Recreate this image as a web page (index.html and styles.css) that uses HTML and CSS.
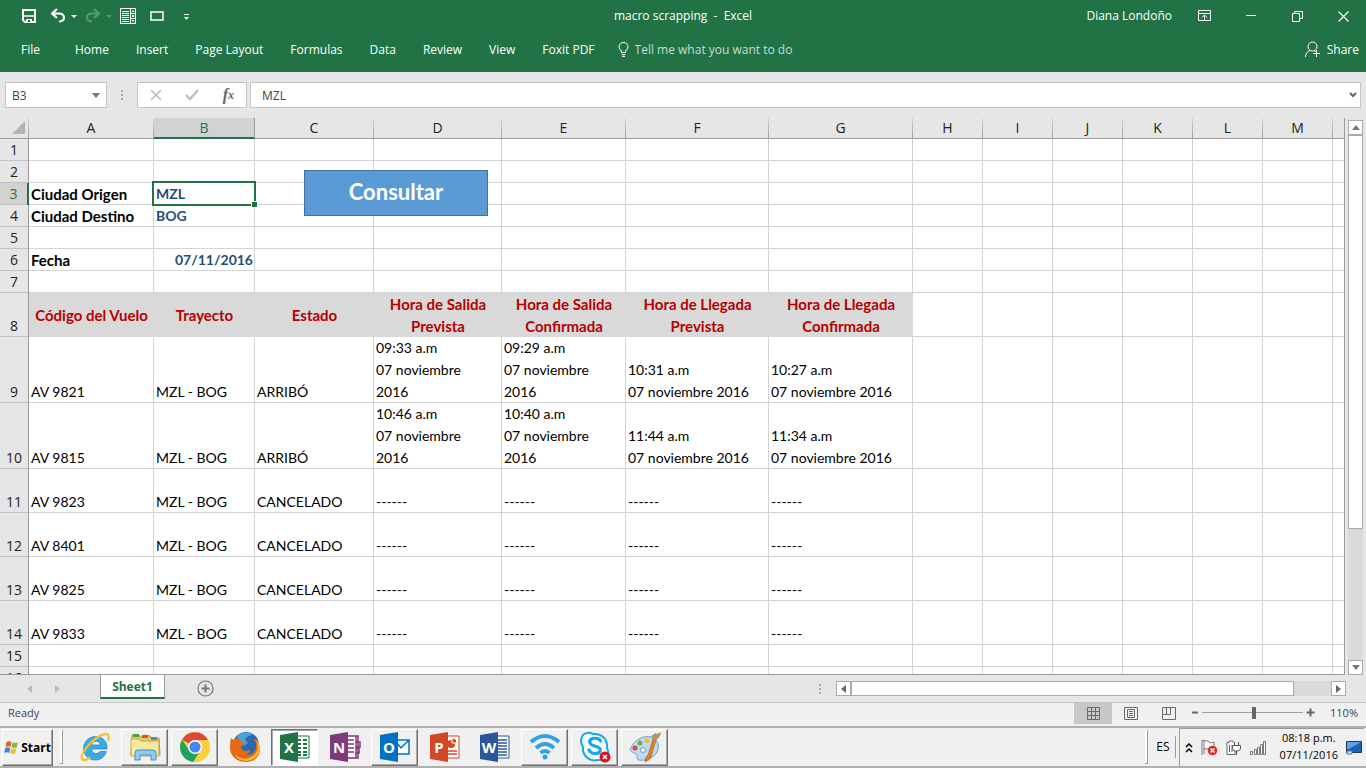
FILE: index.html
```
<!DOCTYPE html>
<html lang="es">
<head>
    <meta charset="UTF-8">
    <meta name="viewport" content="width=device-width, initial-scale=1.0">
    <title>macro scrapping - Excel</title>
    <link rel="stylesheet" href="styles.css">
</head>
<body>
    <!-- Title bar -->
    <header class="title-bar">
        <div class="quick-access">
            <button aria-label="Save"><svg width="21" height="16" viewBox="0 0 21 16"><path d="M1 2h12v12H3l-2-2z" fill="none" stroke="#fff" stroke-width="2"/><path d="M2 8h10" stroke="#fff" stroke-width="1.500"/><path d="M4 11h6v4H4z" fill="#fff"/><path d="M6 12h2v2H6z" fill="#217346"/></svg></button>
            <button aria-label="Undo"><svg width="26" height="16" viewBox="0 0 26 16"><path d="M6 1L1 5.500l5 4.500M1.500 5.500H8a5 4 0 0 1 0 8" fill="none" stroke="#fff" stroke-width="2.200"/><path d="M20 7h6l-3 3z" fill="#fff"/></svg></button>
            <button aria-label="Redo"><svg class="dim" width="27" height="16" viewBox="0 0 27 16"><path d="M9 1l5 4.500L9 10M13.500 5.500H7a5 4 0 0 0 0 8" fill="none" stroke="#fff" stroke-width="2.200"/><path d="M21 7h6l-3 3z" fill="#fff"/></svg></button>
            <button aria-label="Form"><svg width="22" height="18" viewBox="0 0 22 18"><path d="M.5 1.500h15v15H.5zM10.500 1.500v15M10.500 6.500h5M10.500 11.500h5M2 4.500h7M2 6.500h7M2 8.500h7M2 10.500h7M2 12.500h7M2 14.500h7" fill="none" stroke="#fff"/><path d="M11.500 5h3L13 3zM11.500 13h3L13 15zM12 8h2v2h-2z" fill="#fff"/></svg></button>
            <button aria-label="Rectangle"><svg width="25" height="16" viewBox="0 0 25 16"><path d="M1 4h12v8H1z" fill="none" stroke="#fff" stroke-width="1.500"/></svg></button>
            <button aria-label="Customize toolbar"><svg width="7" height="16" viewBox="0 0 7 16"><path d="M1 6.500h5" stroke="#fff"/><path d="M1 9h5l-2.500 3z" fill="#fff"/></svg></button>
        </div>
        <div class="window-title">macro scrapping&nbsp; -&nbsp; Excel</div>
        <div class="window-controls">
            <span class="user-name">Diana Londoño</span>
            <button aria-label="Ribbon display options"><svg width="14" height="12" viewBox="0 0 14 12"><path d="M.5.5h12v10H.5zM.5 3.500h12M6.500 10V5M4 7.500L6.500 5 9 7.500" fill="none" stroke="#fff"/></svg></button>
            <button aria-label="Minimize"><svg width="10" height="10" viewBox="0 0 10 10"><path d="M0 4.500h10" stroke="#fff"/></svg></button>
            <button aria-label="Restore"><svg width="11" height="11" viewBox="0 0 11 11"><path d="M.5 2.500h7v8h-7zM2.500 2.500v-2h8v7h-3" fill="none" stroke="#fff"/></svg></button>
            <button aria-label="Close"><svg width="11" height="11" viewBox="0 0 11 11"><path d="M.5.5l10 10M10.500.5l-10 10" stroke="#fff" stroke-width="1.200"/></svg></button>
        </div>
    </header>

    <!-- Ribbon tabs -->
    <nav class="ribbon">
        <button class="file-tab">File</button>
        <button>Home</button>
        <button>Insert</button>
        <button>Page Layout</button>
        <button>Formulas</button>
        <button>Data</button>
        <button>Review</button>
        <button>View</button>
        <button>Foxit PDF</button>
        <label class="tell-me">
            <svg width="11" height="15" viewBox="0 0 11 15"><path d="M3.500 10.500V9C2 8 1 6.500 1 5a4.500 4.500 0 0 1 9 0c0 1.500-1 3-2.500 4v1.500zM3.500 12.500h4M4 14.400h3" fill="none" stroke="#e3efe8" stroke-width="1.100"/></svg>
            <input type="text" placeholder="Tell me what you want to do" aria-label="Tell me what you want to do">
        </label>
        <button class="share">
            <svg width="16" height="17" viewBox="0 0 16 17"><circle cx="7.500" cy="5.500" r="4.500" fill="none" stroke="#fff"/><path d="M.5 16c0-3 1.500-5.500 4.500-6.500M9 9.500l2 1.500M11.500 9v7M8 12.500h7" fill="none" stroke="#fff"/></svg>
            Share
        </button>
    </nav>

    <!-- Formula bar -->
    <section class="formula-bar">
        <div class="name-box">
            <input type="text" value="B3" aria-label="Name box">
            <button aria-label="Open name list"><svg width="8" height="5" viewBox="0 0 8 5"><path d="M0 0h8L4 5z" fill="#777"/></svg></button>
        </div>
        <span class="dots"></span>
        <div class="formula-buttons">
            <button aria-label="Cancel"><svg width="12" height="12" viewBox="0 0 12 12"><path d="M1 1l10 10M11 1L1 11" stroke="#bdbdbd" stroke-width="1.700"/></svg></button>
            <button aria-label="Enter"><svg width="14" height="12" viewBox="0 0 14 12"><path d="M1 6l4 4 8-9" fill="none" stroke="#bdbdbd" stroke-width="2.300"/></svg></button>
            <button class="fx" aria-label="Insert function">f<sub>x</sub></button>
        </div>
        <div class="formula-input">
            <input type="text" value="MZL" aria-label="Formula">
            <button aria-label="Expand formula bar"><svg width="8" height="6" viewBox="0 0 8 6"><path d="M1 1l3 3 3-3" fill="none" stroke="#666" stroke-width="2"/></svg></button>
        </div>
    </section>

    <!-- Worksheet -->
    <main class="workspace">
        <div class="sheet">
            <table>
                <colgroup>
                    <col class="col-head">
                    <col class="col-a">
                    <col class="col-b">
                    <col class="col-c">
                    <col class="col-d">
                    <col class="col-e">
                    <col class="col-f">
                    <col class="col-g">
                    <col class="col-std" span="6">
                    <col>
                </colgroup>
                <thead>
                    <tr>
                        <th class="corner"><svg width="14" height="14" viewBox="0 0 14 14"><path d="M13 0v13H0z" fill="#b3b3b3"/></svg></th>
                        <th>A</th>
                        <th class="active">B</th>
                        <th>C</th>
                        <th>D</th>
                        <th>E</th>
                        <th>F</th>
                        <th>G</th>
                        <th>H</th>
                        <th>I</th>
                        <th>J</th>
                        <th>K</th>
                        <th>L</th>
                        <th>M</th>
                        <th class="last"></th>
                    </tr>
                </thead>
                <tbody id="sheetBody">
                    <!-- Rows from the script below -->
                </tbody>
            </table>
            <button class="consultar">Consultar</button>
        </div>
        <div class="scroll vertical">
            <button aria-label="Scroll up"><svg width="8" height="5" viewBox="0 0 8 5"><path d="M0 5h8L4 0z" fill="#777"/></svg></button>
            <div class="thumb"></div>
            <div class="track"></div>
            <button aria-label="Scroll down"><svg width="8" height="5" viewBox="0 0 8 5"><path d="M0 0h8L4 5z" fill="#777"/></svg></button>
        </div>
    </main>

    <!-- Sheet tabs -->
    <section class="sheet-bar">
        <div class="sheet-nav">
            <button aria-label="Previous sheet"><svg width="5" height="8" viewBox="0 0 5 8"><path d="M5 0v8L0 4z" fill="#bcbcbc"/></svg></button>
            <button aria-label="Next sheet"><svg width="5" height="8" viewBox="0 0 5 8"><path d="M0 0v8l5-4z" fill="#bcbcbc"/></svg></button>
        </div>
        <button class="sheet-tab">Sheet1</button>
        <button class="add-sheet" aria-label="New sheet"><svg width="17" height="17" viewBox="0 0 17 17"><circle cx="8.500" cy="8.500" r="7.500" fill="none" stroke="#777" stroke-width="1.200"/><path d="M8.500 4.500v8M4.500 8.500h8" stroke="#777" stroke-width="2"/></svg></button>
        <span class="dots"></span>
        <div class="scroll horizontal">
            <button aria-label="Scroll left"><svg width="5" height="8" viewBox="0 0 5 8"><path d="M5 0v8L0 4z" fill="#666"/></svg></button>
            <div class="thumb"></div>
            <div class="track"></div>
            <button aria-label="Scroll right"><svg width="5" height="8" viewBox="0 0 5 8"><path d="M0 0v8l5-4z" fill="#666"/></svg></button>
        </div>
    </section>

    <!-- Status bar -->
    <section class="status-bar">
        <span class="status">Ready</span>
        <div class="views">
            <button class="selected" aria-label="Normal"><svg width="13" height="13" viewBox="0 0 13 13"><path d="M.5.5h12v12H.5zM.5 4.500h12M.5 8.500h12M4.500.5v12M8.500.5v12" fill="none" stroke="#6a6a6a"/></svg></button>
            <button aria-label="Page layout"><svg width="14" height="13" viewBox="0 0 14 13"><path d="M.5.5h13v12H.5zM3.500 2.500h7v8h-7zM5 4.500h4M5 6.500h4M5 8.500h4" fill="none" stroke="#6a6a6a"/></svg></button>
            <button aria-label="Page break preview"><svg width="14" height="13" viewBox="0 0 14 13"><path d="M.5.5h13v12H.5zM4.500.5v7M8.500.5v7M.5 7.500h8" fill="none" stroke="#6a6a6a"/></svg></button>
        </div>
        <div class="zoom">
            <button aria-label="Zoom out"><svg width="9" height="9" viewBox="0 0 9 9"><path d="M2 4.500h6" stroke="#666" stroke-width="2"/></svg></button>
            <input type="range" min="0" max="100" value="52" aria-label="Zoom">
            <button aria-label="Zoom in"><svg width="9" height="9" viewBox="0 0 9 9"><path d="M.5 4.500h8M4.500.5v8" stroke="#666" stroke-width="2"/></svg></button>
            <span>110%</span>
        </div>
    </section>

    <!-- Windows taskbar -->
    <footer class="taskbar">
        <button class="start">
            <svg width="15" height="15" viewBox="0 0 15 15"><path d="M2.500 2Q5 .5 7.500 2L6.500 7Q4 5.500 1.500 7z" fill="#e8602c"/><path d="M8.500 2.300q2.500 1.500 5.500 0l-1.200 5q-2.700 1.500-5.300 0z" fill="#7fb93b"/><path d="M1.200 8q2.600-1.500 5 0l-1 5Q3 11.500.2 13z" fill="#3f83d6"/><path d="M7.200 8.300q2.600 1.500 5.300 0l-1.200 5q-2.600 1.500-5.200 0z" fill="#f5bd2a"/></svg>
            Start
        </button>
        <span class="divider"></span>
        <div class="apps">
            <button aria-label="Internet Explorer">
                <svg width="32" height="32" viewBox="0 0 32 32"><path d="M28 18H12.500c.3 3 2 4.500 4.500 4.500 2 0 3-.8 3.800-2h6.500C25.500 26 22 29 16.500 29 9.500 29 4.500 24 4.500 17.500S10 5.500 16.500 5.500C24 5.500 28.500 10.500 28 18zM12.600 14h8.700c-.4-2.400-2-3.800-4.300-3.800-2.400 0-4 1.500-4.400 3.800z" fill="#3aa9e6" stroke="#1b7fc4" stroke-width=".7"/><path d="M29 10c1.500-5 .5-7-2-7-7 0-19 11-23 19-2 4-1.500 7 1 7 2 0 4-1 6-2.500" fill="none" stroke="#f4c430" stroke-width="2.300"/></svg>
            </button>
            <button class="open" aria-label="File Explorer">
                <svg width="32" height="32" viewBox="0 0 32 32"><path d="M3 4h7l1 2h4V4l6 1 1 2h8l1 17H2z" fill="#e7c866" stroke="#b9933a"/><path d="M4 3h6v3H4z" fill="#42a747"/><path d="M13 4h6v3h-6z" fill="#d7572d"/><path d="M22 6h6v3h-6z" fill="#4a90ca"/><path d="M2 8h8l2 2h18v15H2z" fill="#fae89e" stroke="#c9a64b"/><path d="M6 29v-7q0-3 3-3h15q3 0 3 3v7h-5v-5H11v5z" fill="#90cdec" stroke="#3e94c8"/></svg>
            </button>
            <button class="open" aria-label="Chrome">
                <svg width="32" height="32" viewBox="0 0 32 32"><circle cx="16" cy="16" r="15" fill="#fbcf3b"/><path d="M16 16L3 8.500A15 15 0 0 1 29 9H16z" fill="#dc483c"/><path d="M3 8.500A15 15 0 0 0 14.500 31l7-12L10 19z" fill="#20a45b"/><path d="M16 9h13a15 15 0 0 1-14.500 22l7.500-12z" fill="#fbcf3b"/><circle cx="16" cy="16" r="7" fill="#fff"/><circle cx="16" cy="16" r="5.600" fill="#4484f3"/></svg>
            </button>
            <button aria-label="Firefox">
                <svg width="32" height="32" viewBox="0 0 32 32"><circle cx="17" cy="14" r="13" fill="#2a69ad"/><path d="M8 5c4-4 12-5 16-1-4 0-7 2-8 5l3 3-4 3-5-3z" fill="#48a4dc"/><path d="M2 7l3 2c2-2 4-2 6-1l1 3 4 1-4 4c1 4 5 5 8 3 2 1 1 4-4 5 7 1 12-3 11-12-1-2-2-4-3-5 5 3 7 7 7 11 0 8-6 13-14 13C8 31 1 25 1 17c0-4 0-7 1-10z" fill="#e56a17"/><path d="M26 8c5 6 3 15-4 18-5 3-12 2-16-3 2 6 8 7 12 7 7-1 12-5 13-12 0-4-2-8-5-10z" fill="#f8b82b"/></svg>
            </button>
            <button class="open current" aria-label="Excel">
                <svg width="32" height="32" viewBox="0 0 32 32"><path d="M16 5h14v22H16z" fill="#fff" stroke="#217346"/><path d="M18 9h4M18 13h4M18 17h4M18 21h4M18 24h4M24 9h4M24 13h4M24 17h4M24 21h4M24 24h4" stroke="#217346" stroke-width="2"/><path d="M1 4l18-3v30L1 28z" fill="#217346"/><text class="logo-letter" x="10" y="22">X</text></svg>
            </button>
            <button aria-label="OneNote">
                <svg width="32" height="32" viewBox="0 0 32 32"><path d="M16 5h13v22H16z" fill="#fff" stroke="#80397b" stroke-width="1.500"/><path d="M18 9h7M18 13h7M18 17h7M18 21h7M27 5v22M27 11h4v5h-4M27 17h3v5h-3" fill="none" stroke="#80397b" stroke-width="1.500"/><path d="M1 4l18-3v30L1 28z" fill="#80397b"/><text class="logo-letter" x="10" y="22">N</text></svg>
            </button>
            <button class="open" aria-label="Outlook">
                <svg width="32" height="32" viewBox="0 0 32 32"><path d="M16 9h14v14H16zM17 11l5 6 8-8" fill="#fff" stroke="#0072c6" stroke-width="1.500"/><path d="M1 4l18-3v30L1 28z" fill="#0072c6"/><text class="logo-letter" x="10" y="22">O</text></svg>
            </button>
            <button aria-label="PowerPoint">
                <svg width="32" height="32" viewBox="0 0 32 32"><path d="M16 5h14v22H16z" fill="#fff" stroke="#d24726"/><path d="M19 20h9M19 23h9" stroke="#d24726" stroke-width="1.500"/><circle cx="22" cy="13" r="4" fill="#d24726"/><path d="M23 7v5h5q0-5-5-5z" fill="#d24726" stroke="#fff"/><path d="M1 4l18-3v30L1 28z" fill="#d24726"/><text class="logo-letter" x="10" y="22">P</text></svg>
            </button>
            <button aria-label="Word">
                <svg width="32" height="32" viewBox="0 0 32 32"><path d="M16 5h14v22H16z" fill="#fff" stroke="#2b579a"/><path d="M18 9h10M18 12h10M18 15h10M18 18h10M18 21h10M18 24h10" stroke="#2b579a" stroke-width="1.500"/><path d="M1 4l18-3v30L1 28z" fill="#2b579a"/><text class="logo-letter" x="10" y="22">W</text></svg>
            </button>
            <button class="open" aria-label="Wi-Fi">
                <svg width="32" height="32" viewBox="0 0 32 32"><path d="M2 11q14-12 28 0M7 17q9-8 18 0M11.500 22q4.500-4 9 0" fill="none" stroke="#2fa4df" stroke-width="4"/><circle cx="16" cy="26" r="2.500" fill="#2fa4df"/></svg>
            </button>
            <button class="open" aria-label="Skype">
                <svg width="32" height="32" viewBox="0 0 32 32"><path d="M8 2c3-1 4 0 6 1 8-1 15 5 14 14 3 6-1 13-9 12C10 31 3 24 4 16 0 9 3 3 8 2z" fill="#f4fbff" stroke="#16a9e8" stroke-width="2"/><path d="M21.500 10c-1-3-10-4.500-10.800.5-.7 6 11 3.500 10.600 8.500-.4 5-9.500 4.500-11.300 0" fill="none" stroke="#16a9e8" stroke-width="3.200" stroke-linecap="round"/><circle cx="26" cy="26" r="5.500" fill="#df1023"/><path d="M24 24l4 4M28 24l-4 4" stroke="#fff" stroke-width="1.500"/></svg>
            </button>
            <button class="open" aria-label="Paint">
                <svg width="32" height="32" viewBox="0 0 32 32"><path d="M2 17C5 9 15 4 22 6c7 2 9 9 6 15-4 7-13 9-18 8-4-1 0-5-3-6-3-2-7-2-5-6z" fill="#bddcf0" stroke="#6f9ec0"/><circle cx="6" cy="17" r="2.500" fill="#d4493c"/><circle cx="11" cy="12" r="2.500" fill="#63b43b"/><circle cx="18" cy="9.500" r="2.500" fill="#eebc3a"/><circle cx="14" cy="19" r="2.500" fill="#f4f9fc" stroke="#6f9ec0"/><path d="M16 31q0-5 3-7l5-16 3 1-5 17q-1 3-6 5z" fill="#dc8131" stroke="#a45a1d" stroke-width=".6"/><path d="M23 8V4q2 0 3-2l2 1 4-2q-1 6-5 8z" fill="#b69365"/></svg>
            </button>
        </div>
        <span class="divider end"></span>
        <span class="language">ES</span>
        <div class="tray">
            <svg width="8" height="10" viewBox="0 0 8 10"><path d="M1 4l3-3 3 3M1 9l3-3 3 3" fill="none" stroke="#000" stroke-width="1.500"/></svg>
            <svg width="17" height="17" viewBox="0 0 17 17"><path d="M1 16V1.500h2V15M3 2q3-1 5 1t5 0v8q-3 1-5-.5T3 10" fill="#fff" stroke="#777"/><circle cx="11.500" cy="11.500" r="4.800" fill="#dc2f24"/><path d="M9.500 9.500l4 4M13.500 9.500l-4 4" stroke="#fff" stroke-width="1.500"/></svg>
            <svg width="16" height="17" viewBox="0 0 16 17"><path d="M7 3.500V2H3v1.500H1v12h8V12M3.500 6v7M6 6v7" fill="#fff" stroke="#666"/><path d="M6.500 6.500h8V9q0 3-3 3h-2q-3 0-3-3zM8.500 6.500V3M12.500 6.500V3M10.500 12v4" fill="#fff" stroke="#555"/></svg>
            <svg width="17" height="14" viewBox="0 0 17 14"><path d="M.5 13.500v-3h2v3zM4.500 13.500v-5h2v5zM7.500 13.500v-7h2v7zM10.500 13.500v-10h2v10zM13.500 13.500V.5h2v13z" fill="#fff" stroke="#777"/></svg>
            <time class="clock">08:18 p.m.<br>07/11/2016</time>
            <svg width="16" height="14" viewBox="0 0 16 14"><path d="M.5.5h15v11H.5z" fill="#1d5fb5" stroke="#24364f"/><path d="M1 1h14L3 8H1z" fill="#5da2e6"/><path d="M1 10h5v3H1z" fill="#c9dff2" stroke="#4a7aab"/></svg>
        </div>
    </footer>

    <script>
        const columns = 14;

        // Cell text by row; a "|" is a line break inside the cell
        const rows = [
            {n: 1, cells: []},
            {n: 2, cells: []},
            {n: 3, style: 'field', cells: ['Ciudad Origen', 'MZL']},
            {n: 4, style: 'field', cells: ['Ciudad Destino', 'BOG']},
            {n: 5, cells: []},
            {n: 6, style: 'field date', cells: ['Fecha', '07/11/2016']},
            {n: 7, cells: []},
            {n: 8, style: 'heading', cells: ['Código del Vuelo', 'Trayecto', 'Estado', 'Hora de Salida|Prevista', 'Hora de Salida|Confirmada', 'Hora de Llegada|Prevista', 'Hora de Llegada|Confirmada']},
            {n: 9, cells: ['AV 9821', 'MZL - BOG', 'ARRIBÓ', '09:33 a.m|07 noviembre|2016', '09:29 a.m|07 noviembre|2016', '10:31 a.m|07 noviembre 2016', '10:27 a.m|07 noviembre 2016']},
            {n: 10, cells: ['AV 9815', 'MZL - BOG', 'ARRIBÓ', '10:46 a.m|07 noviembre|2016', '10:40 a.m|07 noviembre|2016', '11:44 a.m|07 noviembre 2016', '11:34 a.m|07 noviembre 2016']}
        ];

        // Cancelled flights
        ['AV 9823', 'AV 8401', 'AV 9825', 'AV 9833'].forEach((flight, i) => {
            rows.push({n: 11 + i, style: 'tall', cells: [flight, 'MZL - BOG', 'CANCELADO', '------', '------', '------', '------']});
        });
        rows.push({n: 15, cells: []}, {n: 16, cells: []});

        function renderRows() {
            let html = '';
            rows.forEach(row => {
                html += `<tr class="${row.style || ''}"><th class="${row.n === 3 ? 'active' : ''}">${row.n}</th>`;
                for (let c = 0; c < columns; c++) {
                    const text = (row.cells[c] || '').split('|').join('<br>');
                    const selected = row.n === 3 && c === 1;
                    html += selected ? `<td class="selected">${text}<span class="outline"></span><span class="handle"></span></td>` : `<td>${text}</td>`;
                }
                html += '</tr>';
            });
            document.getElementById('sheetBody').innerHTML = html;
        }

        renderRows();
    </script>
</body>
</html>
```
FILE: styles.css
```
/* General */
* {
    box-sizing: border-box;
}

body {
    margin: 0;
    height: 100vh;
    display: flex;
    flex-direction: column;
    overflow: hidden;
    background-color: #e6e6e6;
    color: #444;
    font-family: "Open Sans", "Noto Sans", sans-serif;
    font-size: 12px;
}

button, input {
    font: inherit;
    color: inherit;
    background: none;
    border: none;
    padding: 0;
    margin: 0;
}

button {
    display: flex;
    align-items: center;
    justify-content: center;
}

svg {
    display: block;
    flex: none;
}

/* Title bar */
.title-bar {
    display: grid;
    grid-template-columns: 1fr auto 1fr;
    align-items: center;
    height: 32px;
    background-color: #217346;
    color: #fff;
}

.window-title, .user-name {
    padding-bottom: 2px;
}

.quick-access {
    display: flex;
    align-items: center;
    gap: 8px;
    padding-left: 22px;
}

.dim {
    opacity: 0.25;
}

.window-controls {
    display: flex;
    align-items: center;
    justify-content: flex-end;
}

.window-controls button {
    width: 46px;
    height: 30px;
}

.user-name {
    margin-right: 10px;
}

/* Ribbon */
.ribbon {
    display: flex;
    align-items: center;
    gap: 1px;
    height: 40px;
    padding: 0 7px 6px 8px;
    background-color: #217346;
    color: #fff;
}

.ribbon button {
    padding: 0 13px;
    height: 32px;
}

.ribbon .file-tab {
    margin-right: 8px;
}

.tell-me {
    display: flex;
    align-items: center;
    gap: 6px;
    flex: 1;
    padding-left: 9px;
}

.tell-me input {
    flex: 1;
}

.tell-me input::placeholder {
    color: #c5dccf;
    opacity: 1;
}

.ribbon .share {
    gap: 6px;
    padding: 0;
}

/* Formula bar */
.formula-bar {
    display: flex;
    padding: 10px 5px;
}

.name-box, .formula-buttons, .formula-input {
    display: flex;
    align-items: center;
    height: 26px;
    background-color: #fff;
    border: 1px solid #c6c6c6;
}

.name-box {
    width: 102px;
    padding: 0 6px;
}

.name-box input, .formula-input input {
    flex: 1;
    min-width: 0;
}

.dots {
    width: 2px;
    height: 10px;
    margin: auto 14px;
    background: repeating-linear-gradient(#ababab 0 2px, transparent 2px 4px);
}

.formula-buttons {
    width: 110px;
    margin-right: 3px;
    padding: 0 12px;
    justify-content: space-between;
}

.fx {
    font-family: "Liberation Serif", serif;
    font-size: 16px;
    font-style: italic;
    font-weight: bold;
    color: #666;
}

.fx sub {
    font-size: 12px;
}

.formula-input {
    flex: 1;
    padding: 0 3px 0 11px;
}

/* Worksheet */
.workspace {
    flex: 1;
    min-height: 0;
    display: flex;
}

.sheet {
    position: relative;
    flex: 1;
    overflow: hidden;
    border-right: 1px solid #9b9b9b;
    border-bottom: 1px solid #9b9b9b;
    background-color: #fff;
}

table {
    width: 100%;
    table-layout: fixed;
    border-spacing: 0;
    font-family: Lato, sans-serif;
    font-size: 14px;
    line-height: 22px;
    color: #000;
}

.col-head { width: 29px; }
.col-a { width: 125px; }
.col-b { width: 101px; }
.col-c { width: 119px; }
.col-d { width: 128px; }
.col-e { width: 124px; }
.col-f { width: 143px; }
.col-g { width: 144px; }
.col-std { width: 70px; }

th {
    padding: 0;
    background-color: #e6e6e6;
    font-family: "Open Sans", sans-serif;
    font-size: 14px;
    font-weight: normal;
    color: #222;
}

thead th {
    height: 21px;
    line-height: 20px;
    border-bottom: 1px solid #9b9b9b;
    border-right: 1px solid;
    border-image: linear-gradient(#d8d8d8, #9b9b9b) 1;
}

thead th.active {
    background-color: #d2d2d2;
    border-image: none;
    border-right-color: #9b9b9b;
    border-bottom: 2px solid #217346;
    line-height: 19px;
    color: #217346;
}

thead th.last {
    border-image: none;
    border-right: none;
}

.corner svg {
    margin-left: 12px;
}

tbody th {
    height: 22px;
    vertical-align: bottom;
    border-right: 1px solid #9b9b9b;
    box-shadow: inset 0 -1px #c3c3c3;
}

tbody th.active {
    background-color: #d2d2d2;
    border-right: 2px solid #217346;
    color: #217346;
}

/* Gridlines are inset shadows so that they take no room from the text */
td {
    padding: 0 2px;
    vertical-align: bottom;
    white-space: nowrap;
    box-shadow: inset -1px -1px #d4d4d4;
}

td:last-child {
    box-shadow: inset 0 -1px #d4d4d4;
}

.tall td {
    height: 44px;
}

.field td {
    font-size: 15px;
    font-weight: bold;
}

.field td:nth-child(3) {
    font-size: 14px;
    color: #1f4e78;
}

.date td:nth-child(3) {
    text-align: right;
}

.heading td {
    vertical-align: middle;
    text-align: center;
    font-size: 15px;
    font-weight: bold;
    color: #b80000;
}

.heading td:nth-child(-n+8) {
    background-color: #d9d9d9;
    box-shadow: none;
}

.selected {
    position: relative;
}

.outline {
    position: absolute;
    inset: -2px -1px -1px -2px;
    border: 2px solid #217346;
}

.handle {
    position: absolute;
    right: -3px;
    bottom: -3px;
    width: 7px;
    height: 7px;
    background-color: #217346;
    border: 1px solid #fff;
}

/* Macro button that floats over the cells */
.consultar {
    position: absolute;
    left: 304px;
    top: 52px;
    width: 184px;
    height: 46px;
    padding-bottom: 3px;
    background-color: #5b9bd5;
    border: 1px solid #41719c;
    color: #fff;
    font-family: Lato, sans-serif;
    font-size: 22px;
    font-weight: bold;
}

/* Scroll bars */
.scroll {
    display: flex;
}

.scroll button {
    width: 15px;
    height: 15px;
    background-color: #fff;
    border: 1px solid #ababab;
}

.scroll .thumb {
    background-color: #fff;
    border: 1px solid #ababab;
}

.scroll .track {
    flex: 1;
    background-color: #dadada;
}

.vertical {
    flex-direction: column;
    width: 15px;
    margin: 2px 3px 0;
}

.vertical .thumb {
    flex: 3;
}

.horizontal {
    width: 510px;
    margin: 6px 20px 6px 0;
}

.horizontal .thumb {
    flex: 12;
}

/* Sheet tabs */
.sheet-bar {
    display: flex;
    height: 27px;
}

.sheet-nav {
    display: flex;
    align-items: center;
    gap: 23px;
    width: 100px;
    padding-left: 27px;
}

.sheet-tab {
    width: 65px;
    height: 24px;
    background-color: #fff;
    border: solid #9b9b9b;
    border-width: 0 1px;
    border-bottom: 2px solid #217346;
    color: #217346;
    font-weight: bold;
}

.add-sheet {
    margin-left: 32px;
}

.sheet-bar .dots {
    margin-left: auto;
    margin-right: 15px;
}

/* Status bar */
.status-bar {
    display: flex;
    align-items: center;
    height: 24px;
    padding: 0 8px 2px;
    background-color: #f0f0f0;
    border-top: 1px solid #c6c6c6;
    font-size: 11px;
}

.status {
    flex: 1;
}

.status, .zoom {
    padding-bottom: 2px;
}

.views {
    display: flex;
}

.views button {
    width: 38px;
    height: 21px;
}

.views .selected {
    background-color: #c8c8c8;
}

.zoom {
    display: flex;
    align-items: center;
    gap: 3px;
    padding-left: 2px;
}

.zoom span {
    width: 40px;
    text-align: right;
}

input[type="range"] {
    appearance: none;
    width: 101px;
    height: 12px;
}

input[type="range"]::-webkit-slider-runnable-track {
    height: 12px;
    background: linear-gradient(#a0a0a0, #a0a0a0) center / 100% 1px no-repeat;
}

input[type="range"]::-webkit-slider-thumb {
    appearance: none;
    width: 4px;
    height: 12px;
    background-color: #666;
}

/* Taskbar */
.taskbar {
    display: flex;
    align-items: center;
    height: 42px;
    padding: 0 2px;
    background-color: #f0f0f0;
    border-top: 2px solid #b0b0b0;
    border-bottom: 2px solid #b0b0b0;
    color: #000;
}

.start, .apps .open {
    border: 1px solid;
    border-color: #fff #707070 #707070 #fff;
    box-shadow: inset -1px -1px #a8a8a8;
}

.start {
    gap: 2px;
    width: 51px;
    height: 37px;
    font-weight: bold;
}

.divider {
    width: 3px;
    height: 34px;
    margin: 0 8px 0 7px;
    border: 1px solid #9b9b9b;
    border-width: 0 1px 1px 0;
    background-color: #fff;
}

.divider.end {
    margin-left: auto;
}

.apps {
    display: flex;
    gap: 3px;
}

.apps button {
    width: 47px;
    height: 37px;
}

.apps .current {
    background-color: #fff;
    border-color: #707070 #fff #fff #707070;
    box-shadow: inset 1px 1px #a8a8a8;
}

.logo-letter {
    font-size: 15px;
    font-weight: bold;
    text-anchor: middle;
    fill: #fff;
}

.language {
    padding-right: 5px;
    margin-right: 3px;
    line-height: 22px;
    border-right: 1px solid #9b9b9b;
}

.tray {
    display: flex;
    align-items: center;
    gap: 8px;
    height: 38px;
    padding: 0 2px 0 5px;
    border-top: 1px solid #9b9b9b;
    border-left: 1px solid #9b9b9b;
}

.clock {
    padding: 0 0 3px 5px;
    font-size: 11px;
    line-height: 17px;
    text-align: center;
}
```
